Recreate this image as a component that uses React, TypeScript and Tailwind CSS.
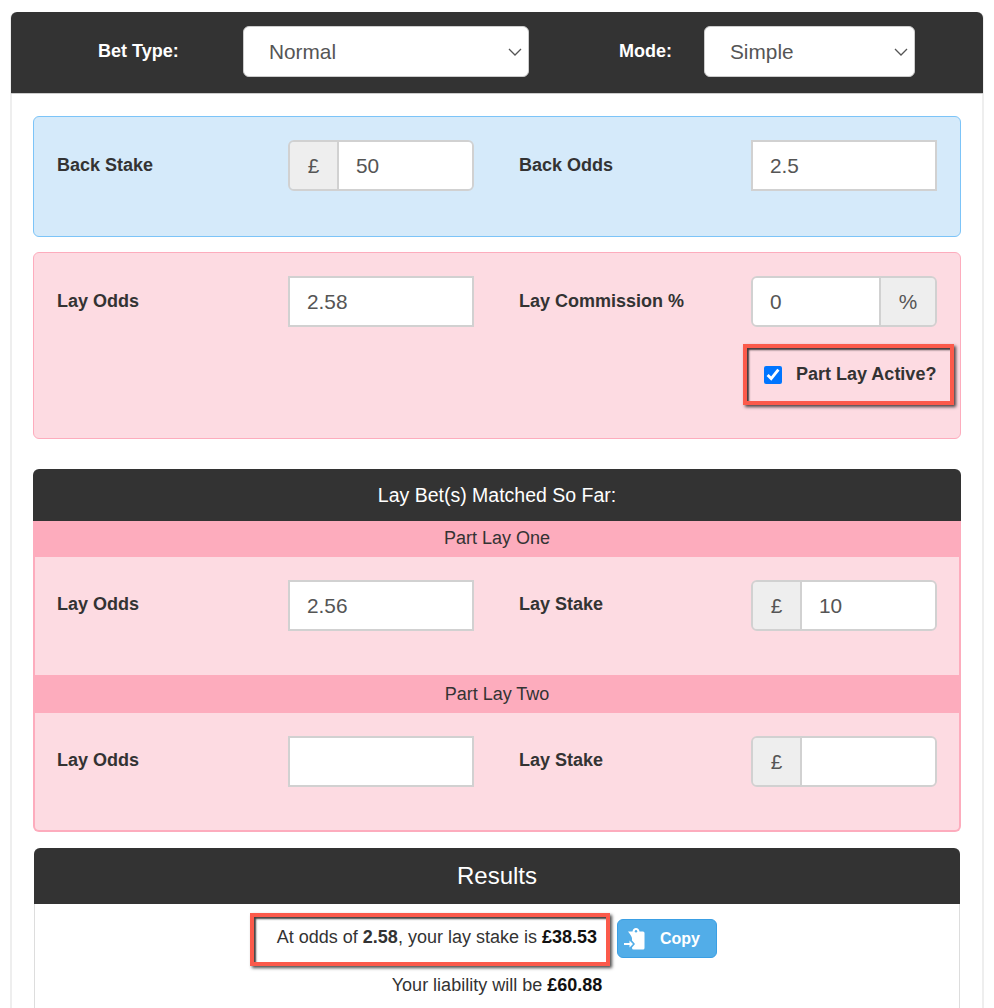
import type { ReactNode } from "react"

const labelCls = "text-[18px] font-bold text-[#333] leading-[25px]"
const inputCls =
  "w-full h-full min-w-0 bg-white px-[17px] text-[20.8px] text-[#555] outline-none"
const selectCls =
  "h-[51px] w-full appearance-none rounded-md border border-[#ccc] bg-white pl-[25px] text-[20.8px] text-[#555] outline-none"
const highlightCls =
  "border-[4px] border-[#fb5a4b] shadow-[2px_2px_3px_rgba(0,0,0,0.7),inset_2px_2px_2px_rgba(0,0,0,0.75)]"

function Row({ children }: { children: ReactNode }) {
  return (
    <div className="grid grid-cols-[231px_186px_277px_186px] items-center">
      {children}
    </div>
  )
}

function PlainInput({ value = "" }: { value?: string }) {
  return (
    <div className="h-[51px] w-[186px] border-2 border-[#d1d1d1]">
      <input className={inputCls} value={value} readOnly />
    </div>
  )
}

function PoundInput({ value = "" }: { value?: string }) {
  return (
    <div className="flex h-[51px] w-[186px] overflow-hidden rounded-md border-2 border-[#d1d1d1]">
      <span className="flex w-[49px] shrink-0 items-center justify-center border-r-2 border-[#d1d1d1] bg-[#eee] text-[20.8px] text-[#555]">
        £
      </span>
      <input className={inputCls} value={value} readOnly />
    </div>
  )
}

function Chevron() {
  return (
    <svg
      viewBox="0 0 14 8"
      className="pointer-events-none absolute right-[7px] top-[22px] h-[8px] w-[14px]"
      fill="none"
      stroke="#555"
      strokeWidth="1.300"
    >
      <path d="M1 1l6 6 6-6" />
    </svg>
  )
}

function CopyIcon() {
  return (
    <svg viewBox="0 0 24 24" className="h-[24px] w-[24px]">
      <path
        fill="#fff"
        d="M6 4.500h4.500C10.800 2.300 12 1 14 1s3.200 1.300 3.500 3.500H21q1.500 0 1.500 1.500v15q0 1.500-1.500 1.500H11.500q-1.500 0-1.500-1.500v-.5l3-3.500-3-3.500v-2Q10 9.500 6 4.500z"
      />
      <circle cx="14" cy="4.200" r="1.200" fill="#52ade8" />
      <path fill="#fff" d="M2 16h5.500v-2.500l3.500 3.500-3.500 3.500V18H2z" />
    </svg>
  )
}

function PartLay({
  title,
  value,
  stake,
  last,
}: {
  title: string
  value?: string
  stake?: string
  last?: boolean
}) {
  return (
    <>
      <div
        className={`flex items-center justify-center bg-[#fdacbd] text-[18px] text-[#333] ${last ? "h-[38px]" : "h-[36px] pb-[2px]"}`}
      >
        {title}
      </div>
      <div
        className={`border-x-2 border-[#fdacbd] bg-[#fddbe2] pl-[22px] pt-[23px] ${last ? "h-[119px] rounded-b-md border-b-2" : "h-[118px]"}`}
      >
        <Row>
          <span className={`${labelCls} pb-[2px]`}>Lay Odds</span>
          <PlainInput value={value} />
          <span className={`${labelCls} pb-[2px] pl-[45px]`}>Lay Stake</span>
          <PoundInput value={stake} />
        </Row>
      </div>
    </>
  )
}

export default function App() {
  return (
    <div className="h-[1008px] overflow-hidden bg-white px-[10px] pt-[12px] font-['Liberation_Sans',Arial,sans-serif]">
      <div className="min-h-[1100px] w-[974px] rounded-t-md border-x-2 border-[#eee]">
        {/* Header */}
        <div className="-mx-[1px] flex h-[82px] items-start rounded-t-md border-b border-[#ccc] bg-[#333] pt-[14px]">
          <span className="ml-[87px] mt-[13px] w-[145px] text-[18px] font-bold leading-[25px] text-white">
            Bet Type:
          </span>
          <div className="relative w-[286px]">
            <select className={selectCls} defaultValue="Normal">
              <option>Normal</option>
            </select>
            <Chevron />
          </div>
          <span className="ml-[90px] mt-[13px] w-[85px] text-[18px] font-bold leading-[25px] text-white">
            Mode:
          </span>
          <div className="relative w-[211px]">
            <select className={selectCls} defaultValue="Simple">
              <option>Simple</option>
            </select>
            <Chevron />
          </div>
        </div>

        <div className="px-[21px] pt-[22px]">
          {/* Back */}
          <div className="h-[121px] rounded-md border border-[#7cc4f8] bg-[#d5eafa] pl-[23px] pt-[23px]">
            <Row>
              <span className={labelCls}>Back Stake</span>
              <PoundInput value="50" />
              <span className={`${labelCls} pl-[45px]`}>Back Odds</span>
              <PlainInput value="2.5" />
            </Row>
          </div>

          {/* Lay */}
          <div className="mt-[15px] h-[187px] rounded-md border border-[#fdacbd] bg-[#fddbe2] pl-[23px] pt-[23px]">
            <Row>
              <span className={labelCls}>Lay Odds</span>
              <PlainInput value="2.58" />
              <span className={`${labelCls} pl-[45px]`}>Lay Commission %</span>
              <div className="flex h-[51px] w-[186px] overflow-hidden rounded-md border-2 border-[#d1d1d1]">
                <input className={inputCls} value="0" readOnly />
                <span className="flex w-[56px] shrink-0 items-center justify-center border-l-2 border-[#d1d1d1] bg-[#eee] text-[20.8px] text-[#555]">
                  %
                </span>
              </div>
            </Row>
            <div className="mr-[6px] mt-[17px] flex justify-end">
              <label className={`flex h-[61px] w-[211px] items-center pl-[17px] ${highlightCls}`}>
                <input type="checkbox" defaultChecked className="h-[18px] w-[18px] accent-[#0075ff]" />
                <span className={`${labelCls} ml-[14px]`}>Part Lay Active?</span>
              </label>
            </div>
          </div>

          {/* Matched so far */}
          <div className="mt-[30px]">
            <div className="flex h-[52px] items-center justify-center rounded-t-md bg-[#333] pt-[2px] text-[19.5px] text-white">
              Lay Bet(s) Matched So Far:
            </div>
            <PartLay title="Part Lay One" value="2.56" stake="10" />
            <PartLay title="Part Lay Two" last />
          </div>

          {/* Results */}
          <div className="mx-[1px] mt-[16px] min-h-[300px] rounded-t-md border-x border-[#ddd]">
            <div className="-mx-[1px] flex h-[56px] items-center justify-center rounded-t-md bg-[#333] text-[24px] text-white">
              Results
            </div>
            <div className="flex items-start pl-[215px] pt-[9px]">
              <div
                className={`flex h-[53px] w-[360px] items-center justify-end pb-[4px] pr-[9px] text-[18px] text-[#333] ${highlightCls}`}
              >
                <span>
                  At odds of <b>2.58</b>, your lay stake is <b className="text-[#111]">£38.53</b>
                </span>
              </div>
              <button className="ml-[7px] mt-[6px] flex h-[39px] w-[100px] items-center rounded-md border border-[#3a9fe4] bg-[#52ade8] pl-[4px] text-[16px] font-bold text-white">
                <CopyIcon />
                <span className="ml-[14px]">Copy</span>
              </button>
            </div>
            <p className="mt-[6px] text-center text-[18px] text-[#333]">
              Your liability will be <b className="text-[#111]">£60.88</b>
            </p>
          </div>
        </div>
      </div>
    </div>
  )
}
